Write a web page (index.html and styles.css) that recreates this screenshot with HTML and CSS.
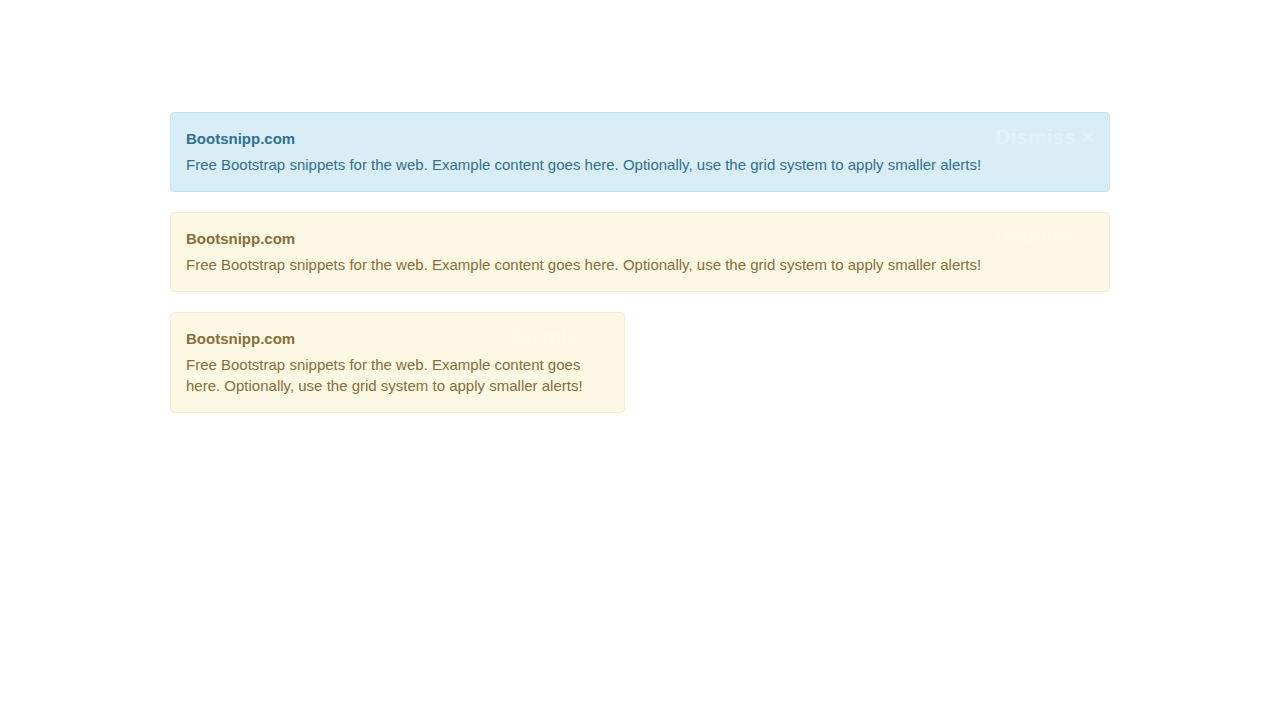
FILE: index.html
```html
<!DOCTYPE html>
<html>
<head>
<meta charset="utf-8">
<link rel="stylesheet" href="styles.css">
</head>
<body>
<div class="container">
  <div class="alert alert-info">
    <button class="close" type="button">Dismiss ×</button>
    <h4 class="title">Bootsnipp.com</h4>
    <p class="text">Free Bootstrap snippets for the web. Example content goes here. Optionally, use the grid system to apply smaller alerts!</p>
  </div>
  <div class="alert alert-warning">
    <button class="close" type="button">Dismiss ×</button>
    <h4 class="title">Bootsnipp.com</h4>
    <p class="text">Free Bootstrap snippets for the web. Example content goes here. Optionally, use the grid system to apply smaller alerts!</p>
  </div>
  <div class="row">
    <div class="alert alert-warning">
      <button class="close" type="button">Dismiss ×</button>
      <h4 class="title">Bootsnipp.com</h4>
      <p class="text">Free Bootstrap snippets for the web. Example content goes here. Optionally, use the grid system to apply smaller alerts!</p>
    </div>
  </div>
</div>
</body>
</html>
```
FILE: styles.css
```css
html, body {
  margin: 0;
  padding: 0;
  background: #fff;
}
body {
  font-family: "Liberation Sans", Arial, sans-serif;
  font-size: 15px;
  line-height: 21px;
}
.container {
  width: 940px;
  margin: 0 auto;
  padding-top: 112px;
}
.row {
  display: grid;
  grid-template-columns: 1fr 1fr;
  column-gap: 30px;
}
.alert {
  padding: 15px;
  border: 1px solid transparent;
  border-radius: 4px;
  margin-bottom: 20px;
}
.alert-info {
  background: #d9edf7;
  border-color: #bce8f1;
  color: #31708f;
}
.alert-warning {
  background: #fcf8e3;
  border-color: #faebcc;
  color: #8a6d3b;
}
.title {
  margin: 0 0 5px;
  font-size: 15px;
  font-weight: bold;
  line-height: 21px;
}
.text {
  margin: 0 0 1px;
}
.close {
  float: right;
  margin-top: -2px;
  padding: 0;
  border: 0;
  background: transparent;
  font-family: "Liberation Sans", Arial, sans-serif;
  font-size: 21px;
  font-weight: bold;
  line-height: 21px;
  color: #fff;
  opacity: 0.25;
  cursor: pointer;
}
```
